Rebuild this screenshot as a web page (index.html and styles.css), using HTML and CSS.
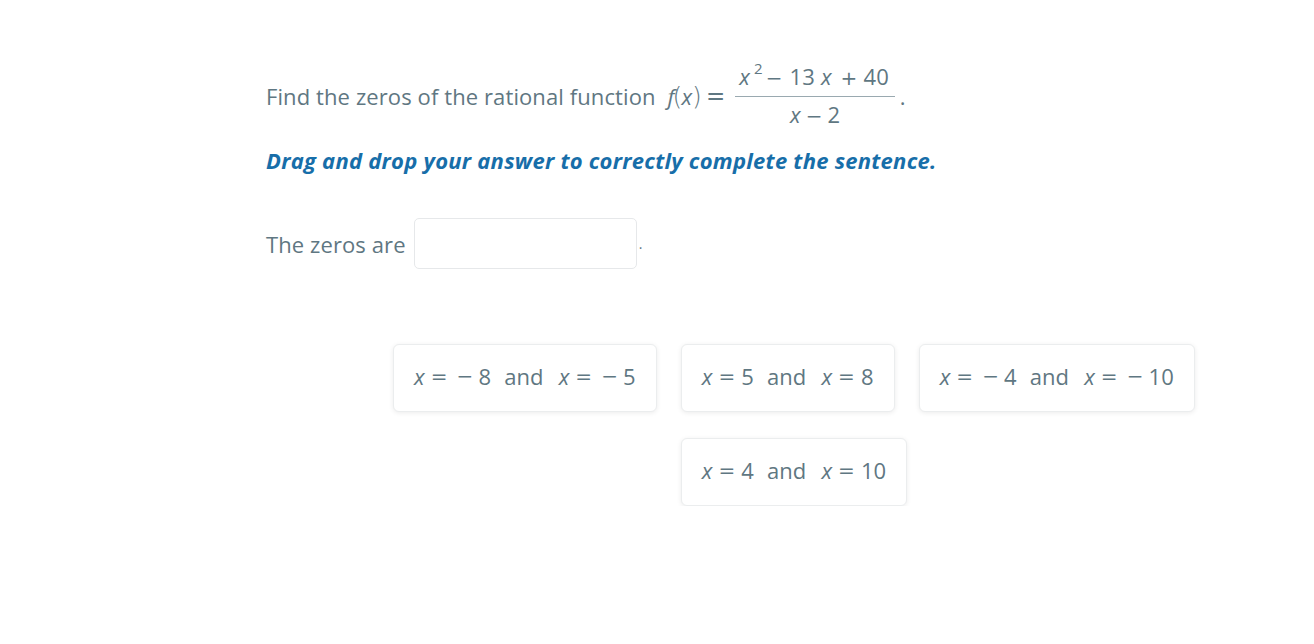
FILE: index.html
```html
<!DOCTYPE html>
<html>
<head>
<meta charset="utf-8">
<link rel="stylesheet" href="styles.css">
</head>
<body>
<div class="page">
  <div class="question">
    <span class="qtext">Find the zeros of the rational function</span>
    <span class="math">
      <span class="mi f">f</span><span class="paren">(</span><span class="mi px">x</span><span class="paren">)</span><span class="op eq">=</span>
      <span class="frac">
        <span class="num"><span class="mi">x</span><sup class="sup">2</sup><span class="op nminus">−</span>13<span class="mi sp">x</span><span class="op nplus">+</span>40</span>
        <span class="den"><span class="mi">x</span><span class="op dminus">−</span>2</span>
      </span>
      <span class="dot">.</span>
    </span>
  </div>
  <div class="instruction">Drag and drop your answer to correctly complete the sentence.</div>
  <div class="sentence">
    <span>The zeros are</span>
    <span class="drop"></span>
    <span class="period">.</span>
  </div>
  <div class="cards">
    <div class="card"><span class="mi">x</span><span class="op">=</span><span class="neg">−</span>8<span class="and">and</span><span class="mi">x</span><span class="op">=</span><span class="neg">−</span>5</div>
    <div class="card"><span class="mi">x</span><span class="op">=</span>5<span class="and">and</span><span class="mi">x</span><span class="op">=</span>8</div>
    <div class="card"><span class="mi">x</span><span class="op">=</span><span class="neg">−</span>4<span class="and">and</span><span class="mi">x</span><span class="op">=</span><span class="neg">−</span>10</div>
    <div class="card"><span class="mi">x</span><span class="op">=</span>4<span class="and">and</span><span class="mi">x</span><span class="op">=</span>10</div>
  </div>
</div>
</body>
</html>
```
FILE: styles.css
```css
html, body {
  margin: 0;
  padding: 0;
  background: #ffffff;
}
body {
  font-family: "Open Sans", "Noto Sans", sans-serif;
  color: #5f7782;
  font-size: 22px;
  letter-spacing: 0.1px;
}
.page {
  padding: 54px 0 0 266px;
}
.question {
  display: flex;
  align-items: center;
  height: 84px;
}
.qtext {
  margin-right: 12px;
}
.math {
  display: inline-flex;
  align-items: center;
}
.mi {
  font-style: italic;
}
.f {
  margin-right: -2px;
}
.paren {
  font-family: "DejaVu Sans", sans-serif;
  font-weight: 200;
  font-size: 25px;
  line-height: 1;
}
.px {
  margin: 0 0 0 -1px;
}
.op, .neg {
  font-family: "DejaVu Sans", sans-serif;
  font-size: 20px;
  font-weight: normal;
}
.eq {
  font-size: 23px;
  margin: 0 4px 0 4px;
}
.frac {
  display: inline-flex;
  flex-direction: column;
  align-items: center;
  margin-left: 6px;
}
.num {
  padding: 0 6px 0 4px;
  border-bottom: 1px solid #9aa9b0;
  line-height: 36px;
}
.den {
  line-height: 34px;
  padding-bottom: 2px;
}
.sup {
  font-size: 15px;
  vertical-align: 11px;
  line-height: 0;
  margin-left: 4px;
}
.nminus {
  margin: 0 7px 0 3px;
}
.nplus {
  margin: 0 6px 0 9px;
}
.dminus {
  margin: 0 5px 0 5px;
}
.sp {
  margin-left: 6px;
}
.dot {
  margin-left: 5px;
}
.instruction {
  margin-top: 7px;
  color: #176ea9;
  font-weight: bold;
  font-style: italic;
  letter-spacing: 0.25px;
  line-height: 30px;
}
.sentence {
  display: flex;
  align-items: center;
  margin-top: 43px;
}
.drop {
  width: 221px;
  height: 49px;
  border: 1px solid #e6e8ea;
  border-radius: 5px;
  margin-left: 8px;
  margin-right: 2px;
}
.period {
  align-self: center;
  font-size: 14px;
}
.cards {
  width: 804px;
  margin-left: 126px;
  margin-top: 75px;
  display: flex;
  flex-wrap: wrap;
  justify-content: center;
  gap: 26px 24px;
}
.card {
  box-sizing: border-box;
  height: 68px;
  padding: 0 20px 4px;
  display: flex;
  align-items: center;
  border: 1px solid #ebedee;
  border-radius: 6px;
  background: #fff;
  box-shadow: 0 1px 5px rgba(0, 0, 0, 0.08);
}
.card .op {
  margin: 0 6px;
}
.neg {
  margin: 0 5px 0 3px;
}
.and {
  margin: 0 15px 0 13px;
}
```
